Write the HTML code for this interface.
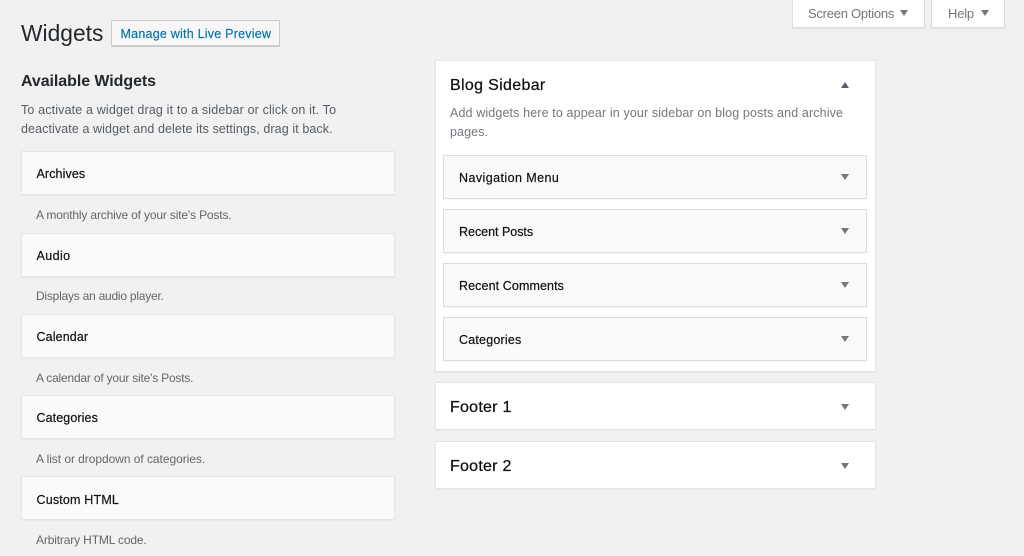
<!DOCTYPE html>
<html><head><meta charset="utf-8">
<style>
html,body{margin:0;padding:0;width:1024px;height:556px;overflow:hidden;background:#f1f1f1;font-family:"Liberation Sans",sans-serif;color:#23282d}
.t{position:absolute;white-space:nowrap;line-height:20px;font-size:13px}
.b{position:absolute;box-sizing:border-box;border:1px solid #e5e5e5;box-shadow:0 1px 1px rgba(0,0,0,.04)}
.w{background:#fafafa;left:21px;width:374px;height:44px}
.i{background:#f9f9f9;border-color:#dcdcdc;left:443px;width:424px;height:44px}
.s{background:#fff;left:435px;width:441px}
.n{color:#111;font-size:13px;font-weight:400;-webkit-text-stroke:.2px #111}
.d{color:#666;font-size:12px}
.h{color:#111;font-size:16px;-webkit-text-stroke:.25px #111}
.a{position:absolute;width:0;height:0;border-left:4.5px solid transparent;border-right:4.5px solid transparent;border-top:6px solid #72777c}
.u{border-top:0;border-bottom:6px solid #555d66}
</style></head><body>

<div class="t" style="left:21px;top:20px;font-size:22.8px;line-height:26px;color:#23282d">Widgets</div>
<div class="b" style="left:111px;top:20px;width:169px;height:26px;background:#f7f7f7;border-color:#ccc;box-shadow:0 1px 0 #ccc"></div>
<div class="t" style="left:120.5px;top:24px;color:#0073aa;font-size:12.5px;letter-spacing:.23px;-webkit-text-stroke:.15px #0073aa">Manage with Live Preview</div>

<div class="b" style="left:792px;top:-1px;width:133px;height:29px;background:#fff;border-color:#ddd;box-shadow:0 1px 1px rgba(0,0,0,.08)"></div>
<div class="t" style="left:808px;top:4px;color:#72777c;font-size:13px;letter-spacing:-.25px">Screen Options</div>
<div class="a" style="left:900px;top:10px"></div>
<div class="b" style="left:931px;top:-1px;width:74px;height:29px;background:#fff;border-color:#ddd;box-shadow:0 1px 1px rgba(0,0,0,.08)"></div>
<div class="t" style="left:948px;top:4px;color:#72777c;font-size:13px;letter-spacing:-.2px">Help</div>
<div class="a" style="left:981px;top:10px"></div>

<div class="t" style="left:21px;top:72px;font-size:16px;font-weight:700;color:#23282d;letter-spacing:-.07px">Available Widgets</div>
<div class="t" style="left:21px;top:100px;color:#555d66;font-size:12.5px;letter-spacing:.15px">To activate a widget drag it to a sidebar or click on it. To</div>
<div class="t" style="left:21px;top:119px;color:#555d66;font-size:12.5px;letter-spacing:.09px">deactivate a widget and delete its settings, drag it back.</div>

<div class="b w" style="top:151px"></div><div class="t n" style="left:36.5px;top:164px;font-size:12.5px;letter-spacing:.1px">Archives</div>
<div class="t d" style="left:36px;top:205px;letter-spacing:-.16px">A monthly archive of your site's Posts.</div>
<div class="b w" style="top:233px"></div><div class="t n" style="left:36.5px;top:245.5px;font-size:12.5px;letter-spacing:.4px">Audio</div>
<div class="t d" style="left:36px;top:286px;letter-spacing:-.23px">Displays an audio player.</div>
<div class="b w" style="top:314px"></div><div class="t n" style="left:36.5px;top:327px;font-size:12.5px;letter-spacing:.12px">Calendar</div>
<div class="t d" style="left:36px;top:368px;letter-spacing:-.2px">A calendar of your site's Posts.</div>
<div class="b w" style="top:395px"></div><div class="t n" style="left:36.5px;top:408px;font-size:12.5px;letter-spacing:.1px">Categories</div>
<div class="t d" style="left:36px;top:449px;letter-spacing:-.05px">A list or dropdown of categories.</div>
<div class="b w" style="top:476px"></div><div class="t n" style="left:36.5px;top:489.5px;font-size:12.5px;letter-spacing:.18px">Custom HTML</div>
<div class="t d" style="left:36px;top:530px;letter-spacing:-.15px">Arbitrary HTML code.</div>

<div class="b s" style="top:60px;height:312px"></div>
<div class="t h" style="left:450px;top:76px;letter-spacing:.33px">Blog Sidebar</div>
<div class="a u" style="left:841px;top:82px"></div>
<div class="t" style="left:450px;top:103px;color:#72777c;font-size:12.5px;letter-spacing:.13px">Add widgets here to appear in your sidebar on blog posts and archive</div>
<div class="t" style="left:450px;top:122px;color:#72777c;font-size:12.5px;letter-spacing:.1px">pages.</div>

<div class="b i" style="top:155px"></div><div class="t n" style="left:459px;top:168px;font-size:12.5px;letter-spacing:.43px">Navigation Menu</div><div class="a" style="left:841px;top:174px"></div>
<div class="b i" style="top:209px"></div><div class="t n" style="left:459px;top:222px;font-size:12.5px;letter-spacing:-.02px">Recent Posts</div><div class="a" style="left:841px;top:228px"></div>
<div class="b i" style="top:263px"></div><div class="t n" style="left:459px;top:276px;font-size:12.5px;letter-spacing:.1px">Recent Comments</div><div class="a" style="left:841px;top:282px"></div>
<div class="b i" style="top:317px"></div><div class="t n" style="left:459px;top:330px;font-size:12.5px;letter-spacing:.2px">Categories</div><div class="a" style="left:841px;top:336px"></div>

<div class="b s" style="top:382px;height:48px"></div>
<div class="t h" style="left:450px;top:398px;letter-spacing:.25px">Footer 1</div><div class="a" style="left:841px;top:404px"></div>
<div class="b s" style="top:441px;height:48px"></div>
<div class="t h" style="left:450px;top:457px;letter-spacing:.25px">Footer 2</div><div class="a" style="left:841px;top:463px"></div>

</body></html>
